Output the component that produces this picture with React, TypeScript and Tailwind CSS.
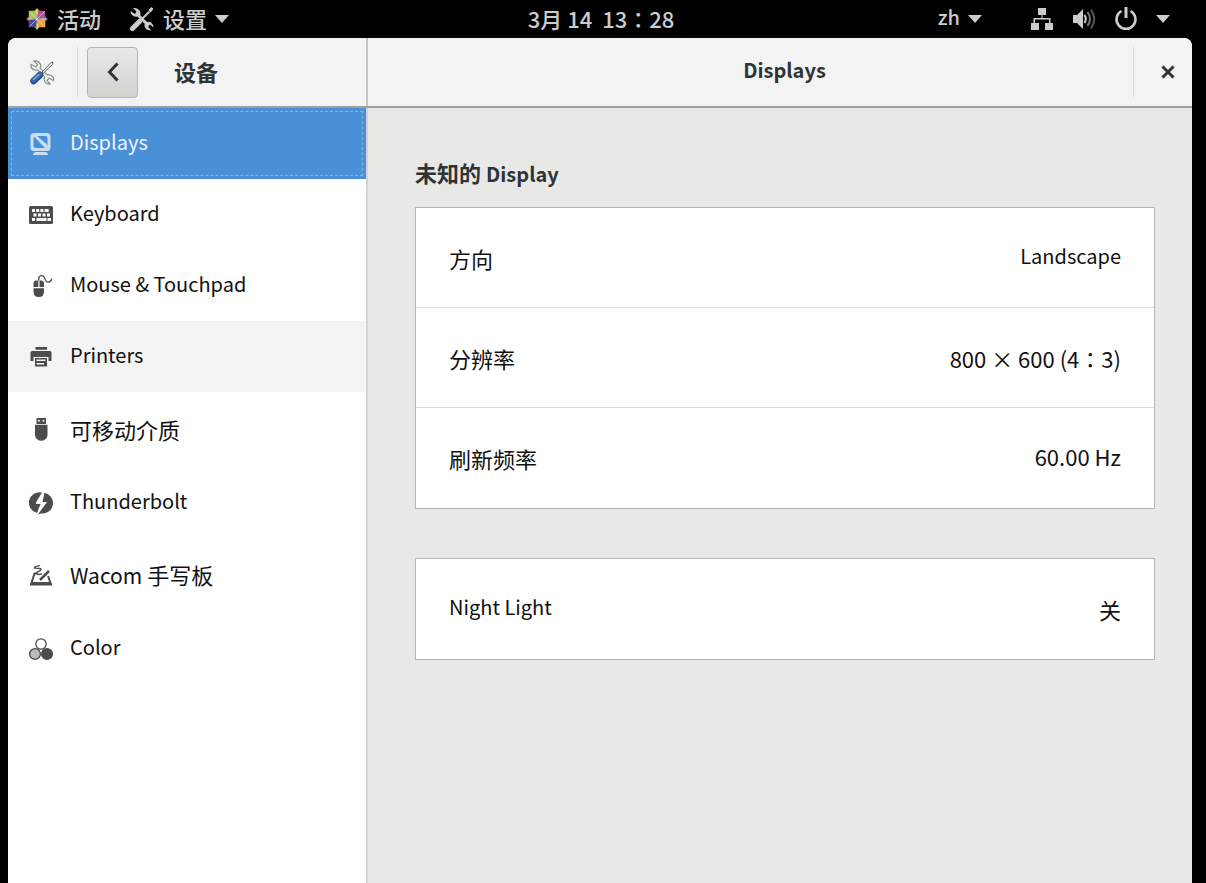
import React from 'react'

type IconProps = { className?: string }

const DisplayIcon = ({ className }: IconProps) => (
    <svg viewBox="0 0 24 24" className={className} fill="currentColor" aria-hidden="true">
        <path fillRule="evenodd" d="M5 1h13a3.500 3.500 0 0 1 3.500 3.500v11A3.500 3.500 0 0 1 18 19H5a3.500 3.500 0 0 1-3.500-3.500v-11A3.500 3.500 0 0 1 5 1zM6.500 4A2 2 0 0 0 4.500 6v8a2 2 0 0 0 2 2h10a2 2 0 0 0 2-2V6a2 2 0 0 0-2-2z" />
        <path d="M4.500 4h3.500L18.500 13v3H16z" />
        <path d="M6 20h11q2 1 2 3H4q0-2 2-3z" />
    </svg>
)

const KeyboardIcon = ({ className }: IconProps) => (
    <svg viewBox="0 0 24 24" className={className} aria-hidden="true">
        <rect x="0" y="3" width="24" height="18" rx="1.500" fill="currentColor" />
        <path fill="#fff" d="M3 6h3v3H3zM7.200 6h3v3h-3zM11.400 6h3v3h-3zM15.600 6h4v3h-4zM4.500 10.500h3v3h-3zM9 10.500h3v3H9zM13.500 10.500h3v3h-3zM18 10.500h3v3h-3zM3 15h3v3H3zM7.500 15h10v3h-10zM18.500 15H22v3h-3.500z" />
    </svg>
)

const MouseIcon = ({ className }: IconProps) => (
    <svg viewBox="0 0 24 24" className={className} fill="currentColor" aria-hidden="true">
        <path d="M4.500 13V9.500q0-3 3-3h1.800V13zM10.500 13V6.500H12q3 0 3 3V13zM4.500 14.300H15v3.200q0 5.500-5.200 5.500T4.500 17.500z" />
        <path d="M9.800 6.500V4.500q0-2.800 3-2.800c4 0 2.500 6.500 6 6.500q3 0 4-3.500" fill="none" stroke="currentColor" strokeWidth="1.300" />
    </svg>
)

const PrinterIcon = ({ className }: IconProps) => (
    <svg viewBox="0 0 24 24" className={className} fill="currentColor" aria-hidden="true">
        <path d="M6.500 2h11.500v2.800H6.500zM3 6h18q1.500 0 1.500 1.500V16h-3v-4H4.500v4h-3V7.500Q1.500 6 3 6z" />
        <path fillRule="evenodd" d="M6 13h12v8.500H6zM7.500 14.500v1.500h9v-1.500zM7.500 18v1.500H15V18z" />
    </svg>
)

const UsbIcon = ({ className }: IconProps) => (
    <svg viewBox="0 0 24 24" className={className} fill="currentColor" aria-hidden="true">
        <path fillRule="evenodd" d="M7.500 0H17v6H7.500zM9 2v1.500h1.800V2zM13.500 2v1.500h1.800V2z" />
        <path d="M6 6.800h12.500V17q0 3-2.500 4.500-1.500 1.200-3.800 1.200T8.500 21.500Q6 20 6 17z" />
    </svg>
)

const ThunderboltIcon = ({ className }: IconProps) => (
    <svg viewBox="0 0 24 24" className={className} fill="currentColor" aria-hidden="true">
        <path d="M13 1.500 7.500 10.500 7 13h4.500L8 22A10.500 10.500 0 0 1 13 1.500z" />
        <path d="M15.500 1.800A10.500 10.500 0 0 1 12 22.500L8.500 23.500 10 22l8-11h-4.500z" />
    </svg>
)

const WacomIcon = ({ className }: IconProps) => (
    <svg viewBox="0 0 24 24" className={className} fill="none" stroke="currentColor" aria-hidden="true">
        <path d="M8.500 9.500H5.500L2.500 19h19L19 12" strokeWidth="2" />
        <path d="M1 20.500h22" strokeWidth="2" />
        <path d="M11 16 20 7" strokeWidth="2.500" />
        <path d="M11 1.500c-3.500 1-6 1.500-5.500 2.500s7-.5 6.500 1.500-5.500 2-4 4 4 .500 5 .5" strokeWidth="1.300" />
    </svg>
)

const ColorIcon = ({ className }: IconProps) => (
    <svg viewBox="0 0 24 24" className={className} stroke="currentColor" aria-hidden="true">
        <circle cx="12" cy="7" r="5.200" fill="#fff" strokeWidth="1.300" />
        <circle cx="18" cy="17" r="5.400" fill="currentColor" strokeWidth="1.300" />
        <circle cx="6" cy="17" r="5.400" fill="#bbb" strokeWidth="1.300" />
    </svg>
)

const ToolsIcon = ({ className }: IconProps) => (
    <svg viewBox="0 0 26 26" className={className} fill="none" stroke="currentColor" aria-hidden="true">
        <path d="m8 8 11 11" strokeWidth="3" />
        <path d="M4 2 7.500 5.500 6 8 1.500 5q0 4 4 5.500 6.500 1 6-4Q10 1.500 4 2zM22.500 24.500 19 21l2-2.500 3.500 3q0-4-3.500-5.500-6-1-5.500 4 1 4.500 7 4.500z" fill="currentColor" stroke="none" />
        <path d="m12.500 13.500 8-8" strokeWidth="2" />
        <path d="m19.500 4 3-3 2 2L21.500 6.500z" fill="currentColor" stroke="none" />
        <path d="m3.500 22.500 7-7" strokeWidth="5" strokeLinecap="round" />
    </svg>
)

const SettingsLogo = ({ className }: IconProps) => (
    <svg viewBox="0 0 26 26" className={className} fill="none" aria-hidden="true">
        <path d="m8 8 12 12" stroke="#8b8e8a" strokeWidth="4" />
        <path d="M5 2 8.500 5.500 7 8 2 5.500Q1.500 10 6 11t6-4Q10.500 1.500 5 2zM21 25l-3-3.500 2-2.500 4.500 2.500q1-4-3.500-5.500t-6 4q1 5.500 6 5z" fill="#f2f2ef" stroke="#8b8e8a" strokeWidth="1.200" />
        <path d="m8 8 11 11" stroke="#eeeeec" strokeWidth="2" />
        <path d="m13 13 9-9.500 2-.5-.5 2.500L14 14.500z" fill="#eeeeec" stroke="#666864" strokeWidth="1" />
        <path d="m4.500 22 6.500-6" stroke="#204a87" strokeWidth="6.500" strokeLinecap="round" />
        <path d="m4.500 21.500 6.500-6" stroke="#3569ad" strokeWidth="4.500" strokeLinecap="round" />
        <path d="m4.500 20.500 5.500-5" stroke="#8fb4dd" strokeWidth="1.200" strokeLinecap="round" />
    </svg>
)

const CentosIcon = ({ className }: IconProps) => (
    <svg viewBox="0 0 24 24" className={className} aria-hidden="true">
        <path fill="#f2a73b" d="m12 0 3.500 4-3.500 4-3.500-4z" />
        <path fill="#68699f" d="m24 12-4 3.500-4-3.500 4-3.500z" />
        <path fill="#a2d034" d="m12 24-3.500-4 3.500-4 3.500 4z" />
        <path fill="#a64d92" d="m0 12 4-3.500L8 12l-4 3.500z" />
        <path fill="#a2d034" d="M3 3h8.500v8.500H3z" />
        <path fill="#b0539a" d="M12.500 3H21v8.500h-8.500z" />
        <path fill="#4a4996" d="M3 12.500h8.500V21H3z" />
        <path fill="#f0a52e" d="M12.500 12.500H21V21h-8.500z" />
        <path d="M12 2v20M2 12h20" stroke="#eee" strokeWidth="1" />
        <path d="m4 4 16 16M20 4 4 20" stroke="#eee" strokeWidth="0.6" />
    </svg>
)

const NetworkIcon = ({ className }: IconProps) => (
    <svg viewBox="0 0 24 24" className={className} fill="currentColor" aria-hidden="true">
        <path d="M8 1h8v7h-3.500v3H20.500v5H23v7h-8v-7h4v-3.500H5V16h4v7H1v-7h2.500v-5h8V8H8z" />
    </svg>
)

const VolumeIcon = ({ className }: IconProps) => (
    <svg viewBox="0 0 24 24" className={className} fill="none" aria-hidden="true">
        <path d="M1 8h4l6-6v20l-6-6H1z" fill="currentColor" />
        <path d="M12.500 8q2.500 4 0 8" stroke="currentColor" strokeWidth="2" />
        <path d="M15.500 5q5 7 0 14" stroke="#777" strokeWidth="2" />
        <path d="M19 2.500q6.500 9.500 0 19" stroke="#555" strokeWidth="2" />
    </svg>
)

const PowerIcon = ({ className }: IconProps) => (
    <svg viewBox="0 0 24 24" className={className} fill="none" stroke="currentColor" strokeWidth="2.500" aria-hidden="true">
        <path d="M7.500 4a9.500 9.500 0 1 0 9 0" />
        <path d="M12 0v11" strokeWidth="3" />
    </svg>
)

const Caret = () => (
    <svg viewBox="0 0 14 8" className="h-2 w-3.5" fill="currentColor" aria-hidden="true">
        <path d="M0 0h14L7 8z" />
    </svg>
)

// full-width colon, centred in its cell
const Colon = () => <span className="font-['Noto_Sans_CJK_JP',sans-serif]">：</span>

const sections = [
    { name: 'Displays', icon: DisplayIcon, state: 'active' },
    { name: 'Keyboard', icon: KeyboardIcon },
    { name: 'Mouse & Touchpad', icon: MouseIcon },
    { name: 'Printers', icon: PrinterIcon, state: 'hover' },
    { name: '可移动介质', icon: UsbIcon, cjk: true },
    { name: 'Thunderbolt', icon: ThunderboltIcon },
    { name: <><span className="text-[21px]">Wacom</span> 手写板</>, icon: WacomIcon, cjk: true },
    { name: 'Color', icon: ColorIcon },
]

const SettingRow = ({ label, value }: { label: React.ReactNode; value: React.ReactNode }) => (
    <button type="button" className="flex h-[100px] w-full items-center justify-between px-[33px] text-left">
        <span>{label}</span>
        <span>{value}</span>
    </button>
)

// Latin text is set a little smaller and higher than the Chinese text
const Latin = ({ children }: { children: React.ReactNode }) => (
    <span className="block pb-1 text-xl leading-8">{children}</span>
)

const TopBar = () => (
    <header className="grid h-[38px] grid-cols-[1fr_auto_1fr] items-center bg-black font-medium text-[#ccc]">
        <div className="flex items-center pl-[26px]">
            <button type="button" className="flex items-center gap-[9px]">
                <CentosIcon className="h-[22px] w-[22px]" />
                <span className="pb-0.5">活动</span>
            </button>
            <button type="button" className="ml-7 flex items-center gap-2">
                <ToolsIcon className="h-[26px] w-[26px]" />
                <span className="pb-0.5">设置</span>
                <Caret />
            </button>
        </div>
        <button type="button" className="pr-1 pb-0.5 whitespace-pre">3月 14  13<Colon />28</button>
        <div className="flex items-center justify-end pr-9">
            <button type="button" className="flex items-center gap-2">
                <Latin>zh</Latin>
                <Caret />
            </button>
            <button type="button" aria-label="System" className="ml-12 flex items-center gap-[18px]">
                <NetworkIcon className="h-6 w-6" />
                <VolumeIcon className="h-6 w-6" />
                <PowerIcon className="h-6 w-6" />
                <Caret />
            </button>
        </div>
    </header>
)

const App = () => {
    return (
        <div className="flex min-h-screen flex-col bg-black font-['Noto_Sans_CJK_SC',sans-serif] text-[22px] leading-8 text-[#111]">
            <TopBar />
            <div className="mr-[14px] ml-2 flex flex-1 flex-col overflow-hidden rounded-t-lg bg-[#e8e8e7]">
                <div className="flex h-[70px] border-b-2 border-[#a1a19c] bg-[#f3f3f3] font-bold text-[#2e3436]">
                    <div className="flex w-[360px] shrink-0 items-center border-r-2 border-[#c5c5c2] pl-[21px]">
                        <SettingsLogo className="h-[26px] w-[26px]" />
                        <div className="ml-[22px] h-[50px] w-px bg-[#d8d8d6]" />
                        <button
                            type="button"
                            aria-label="Back"
                            className="ml-[9px] flex h-[51px] w-[51px] items-center justify-center rounded border border-[#b6b6b3] bg-linear-to-b from-[#e8e8e7] to-[#d2d2d0]"
                        >
                            <svg viewBox="0 0 12 20" className="h-5 w-3" fill="none" stroke="currentColor" strokeWidth="3" aria-hidden="true">
                                <path d="M10.500 1.500 2.500 10l8 8.500" />
                            </svg>
                        </button>
                        <h2 className="ml-9 pb-0.5">设备</h2>
                    </div>
                    <h1 className="flex flex-1 items-center justify-center pl-[68px]">
                        <Latin>Displays</Latin>
                    </h1>
                    <div className="flex w-[59px] items-center">
                        <div className="h-[50px] w-px bg-[#d8d8d6]" />
                        <button type="button" aria-label="Close" className="flex flex-1 items-center justify-center pl-2.5">
                            <svg viewBox="0 0 14 14" className="h-3.5 w-3.5" fill="none" stroke="currentColor" strokeWidth="3" aria-hidden="true">
                                <path d="m1.500 1.500 11 11M12.500 1.500l-11 11" />
                            </svg>
                        </button>
                    </div>
                </div>

                <div className="flex flex-1">
                    <nav className="w-[360px] shrink-0 border-r-2 border-[#d5d5d3] bg-white">
                        {sections.map(({ name, icon: Icon, state, cjk }, idx) => (
                            <a
                                key={idx}
                                href="#"
                                aria-current={state === 'active' ? 'page' : undefined}
                                className={`relative flex items-center gap-[17px] pl-[21px] ${cjk ? 'h-[75px]' : 'h-[71px]'} ${state === 'active' ? 'bg-[#4a90d9] text-[#edf4fb]' : ''} ${state === 'hover' ? 'bg-[#f4f4f4]' : ''}`}
                            >
                                {state === 'active' && <span className="absolute inset-[3px] border border-dashed border-[#84b4e6]" />}
                                <Icon className={`h-6 w-6 ${state === 'active' ? 'text-[#c8def5]' : 'text-[#4c4c4c]'}`} />
                                {cjk ? <span className="pb-0.5">{name}</span> : <Latin>{name}</Latin>}
                            </a>
                        ))}
                    </nav>

                    <main className="flex-1 pt-12 pr-[37px] pl-[47px]">
                        <h2 className="font-bold text-[#2e3436]">
                            未知的 <span className="text-xl">Display</span>
                        </h2>
                        <section className="mt-[19px] divide-y divide-[#dededd] border border-[#b6b6b3] bg-white">
                            <SettingRow label="方向" value={<Latin>Landscape</Latin>} />
                            <SettingRow label="分辨率" value={<>800 × 600 (4<Colon />3)</>} />
                            <SettingRow label="刷新频率" value={<span className="block pb-1">60.00 Hz</span>} />
                        </section>
                        <section className="mt-[49px] border border-[#b6b6b3] bg-white">
                            <SettingRow label={<Latin>Night Light</Latin>} value="关" />
                        </section>
                    </main>
                </div>
            </div>
        </div>
    )
}

export default App
